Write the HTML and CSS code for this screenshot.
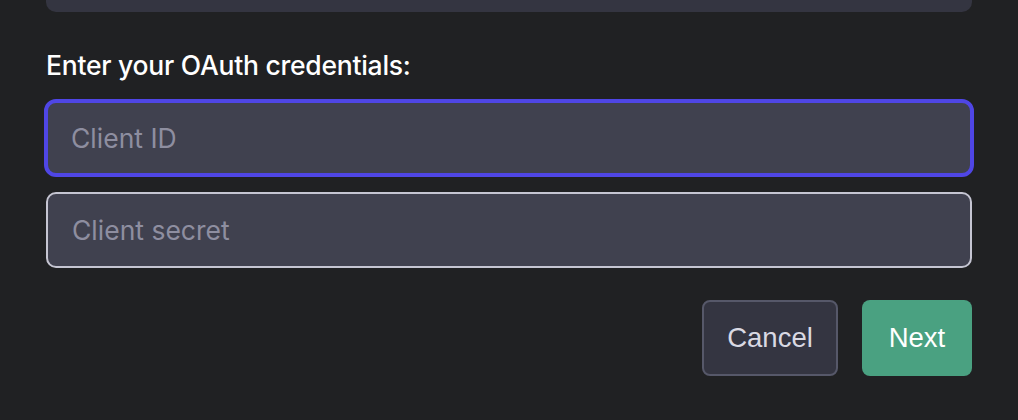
FILE: index.html
```html
<!DOCTYPE html>
<html>
<head>
<meta charset="utf-8">
<link rel="stylesheet" href="styles.css">
</head>
<body>
<div class="dialog">
  <div class="top-box"></div>
  <h2 class="title">Enter your OAuth credentials:</h2>
  <div class="fields">
    <input class="field field-focus" type="text" placeholder="Client ID">
    <input class="field" type="text" placeholder="Client secret">
  </div>
  <div class="actions">
    <button class="btn btn-cancel">Cancel</button>
    <button class="btn btn-next">Next</button>
  </div>
</div>
</body>
</html>
```
FILE: styles.css
```css
html, body {
  margin: 0;
  padding: 0;
  background: #202123;
  height: 100%;
}
.dialog {
  padding: 0 46px;
  font-family: "Inter", "Liberation Sans", sans-serif;
}
.top-box {
  height: 12px;
  background: #343541;
  border-radius: 0 0 10px 10px;
}
.title {
  margin: 31px 0 0 0;
  font-size: 26.5px;
  line-height: 44px;
  font-weight: 500;
  color: #ffffff;
  letter-spacing: -0.25px;
}
.fields {
  display: flex;
  flex-direction: column;
  gap: 16px;
  margin-top: 13px;
}
.field {
  box-sizing: border-box;
  width: 100%;
  height: 76px;
  margin: 0;
  padding: 0 24px;
  background: #40414f;
  border: 2px solid #c5c5d2;
  border-radius: 10px;
  font-family: inherit;
  font-size: 26.5px;
  color: #ececf1;
  outline: none;
}
.field::placeholder {
  color: #8e8ea0;
}
.field-focus {
  border: 4px solid #4f46e5;
  width: calc(100% + 4px);
  margin: -1px -2px -1px -2px;
  height: 78px;
  padding: 0 23px;
  border-radius: 12px;
}
.actions {
  display: flex;
  justify-content: flex-end;
  gap: 24px;
  margin-top: 32px;
}
.btn {
  box-sizing: border-box;
  height: 76px;
  border-radius: 8px;
  font-family: "Liberation Sans", Arial, sans-serif;
  font-size: 27.5px;
  padding: 0;
  cursor: pointer;
}
.btn-cancel {
  width: 136px;
  background: #343541;
  border: 2px solid #565869;
  color: #d9d9e3;
}
.btn-next {
  width: 110px;
  background: #4aa181;
  border: none;
  color: #ffffff;
}
```
